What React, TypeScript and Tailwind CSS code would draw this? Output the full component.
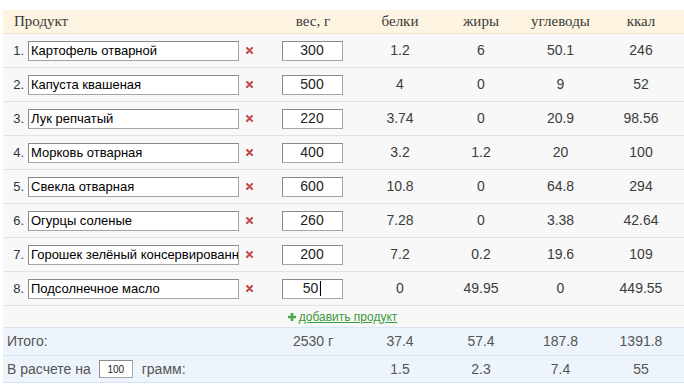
const rows = [
  { name: "Картофель отварной", weight: "300", p: "1.2", f: "6", c: "50.1", kcal: "246" },
  { name: "Капуста квашеная", weight: "500", p: "4", f: "0", c: "9", kcal: "52" },
  { name: "Лук репчатый", weight: "220", p: "3.74", f: "0", c: "20.9", kcal: "98.56" },
  { name: "Морковь отварная", weight: "400", p: "3.2", f: "1.2", c: "20", kcal: "100" },
  { name: "Свекла отварная", weight: "600", p: "10.8", f: "0", c: "64.8", kcal: "294" },
  { name: "Огурцы соленые", weight: "260", p: "7.28", f: "0", c: "3.38", kcal: "42.64" },
  { name: "Горошек зелёный консервированный", weight: "200", p: "7.2", f: "0.2", c: "19.6", kcal: "109" },
  { name: "Подсолнечное масло", weight: "50", p: "0", f: "49.95", c: "0", kcal: "449.55", focused: true },
];

const cols = "grid grid-cols-[265px_90px_84px_78px_81px_80px] items-center";

function RemoveIcon() {
  return (
    <svg width="7" height="7" viewBox="0 0 7 7" className="shrink-0">
      <path d="M1 1L6 6M6 1L1 6" stroke="#c24848" strokeWidth="2" strokeLinecap="round" />
    </svg>
  );
}

function PlusIcon() {
  return (
    <svg width="8" height="8" viewBox="0 0 8 8" className="shrink-0">
      <path d="M4 0.8V7.2M0.8 4H7.2" stroke="#4aa84a" strokeWidth="2.6" strokeLinecap="round" />
    </svg>
  );
}

export default function App() {
  return (
    <div className="w-[684px] h-[386px] overflow-hidden bg-white pt-[10px] font-['Liberation_Sans',Arial,sans-serif]">
      <div className="ml-[3px] w-[700px]">
        {/* Header */}
        <div className={`${cols} h-[24px] bg-[#fdf4e1] border-b border-[#efe3c8] font-['Liberation_Serif','Times_New_Roman',serif] text-[15px] text-[#3a3a3a]`}>
          <div className="pl-[11px]">Продукт</div>
          <div className="text-center">вес, г</div>
          <div className="text-center">белки</div>
          <div className="text-center">жиры</div>
          <div className="text-center">углеводы</div>
          <div className="text-center">ккал</div>
        </div>

        {/* Product rows */}
        {rows.map((r, i) => (
          <div key={i} className={`${cols} h-[34px] bg-[#f8f8f8] border-b border-[#e2e2e2] text-[14px] text-[#3c3c3c]`}>
            <div className="flex items-center">
              <span className="w-[21px] text-right text-[13px] text-[#333]">{i + 1}.</span>
              <div className="ml-[4px] w-[211px] h-[20px] bg-white border border-[#a5a5a5] border-t-[#8a8a8a] border-l-[#8a8a8a] pl-[2px] text-[13px] leading-[18px] text-black whitespace-nowrap overflow-hidden">
                {r.name}
              </div>
              <div className="ml-[7px]">
                <RemoveIcon />
              </div>
            </div>
            <div className="flex justify-center pr-[2px]">
              <div className="w-[61px] h-[20px] bg-white border border-[#a5a5a5] border-t-[#8a8a8a] border-l-[#8a8a8a] flex items-center justify-center text-[14px] text-[#222]">
                {r.weight}
                {r.focused && <span className="w-px h-[15px] bg-black ml-[2px]" />}
              </div>
            </div>
            <div className="text-center">{r.p}</div>
            <div className="text-center">{r.f}</div>
            <div className="text-center">{r.c}</div>
            <div className="text-center">{r.kcal}</div>
          </div>
        ))}

        {/* Add product */}
        <div className="h-[22px] w-[681px] bg-[#f8f8f8] border-b border-[#d9e5f1] flex items-center justify-center gap-[3px] pr-[2px]">
          <PlusIcon />
          <a className="text-[12px] text-[#3b9a3b] underline cursor-pointer">добавить продукт</a>
        </div>

        {/* Totals */}
        <div className={`${cols} h-[28px] bg-[#edf4fb] border-b border-[#d6e3f0] text-[14px] text-[#555]`}>
          <div className="pl-[4px]">Итого:</div>
          <div className="text-center">2530 г</div>
          <div className="text-center">37.4</div>
          <div className="text-center">57.4</div>
          <div className="text-center">187.8</div>
          <div className="text-center">1391.8</div>
        </div>

        <div className={`${cols} h-[27px] bg-[#edf4fb] border-b border-[#d6e3f0] text-[14px] text-[#555]`}>
          <div className="pl-[4px] flex items-center">
            <span>В расчете на</span>
            <div className="ml-[8px] w-[34px] h-[18px] bg-white border border-[#a5a5a5] border-t-[#8a8a8a] border-l-[#8a8a8a] flex items-center justify-center text-[10px] text-[#222]">
              100
            </div>
            <span className="ml-[9px]">грамм:</span>
          </div>
          <div />
          <div className="text-center">1.5</div>
          <div className="text-center">2.3</div>
          <div className="text-center">7.4</div>
          <div className="text-center">55</div>
        </div>
      </div>
    </div>
  );
}
